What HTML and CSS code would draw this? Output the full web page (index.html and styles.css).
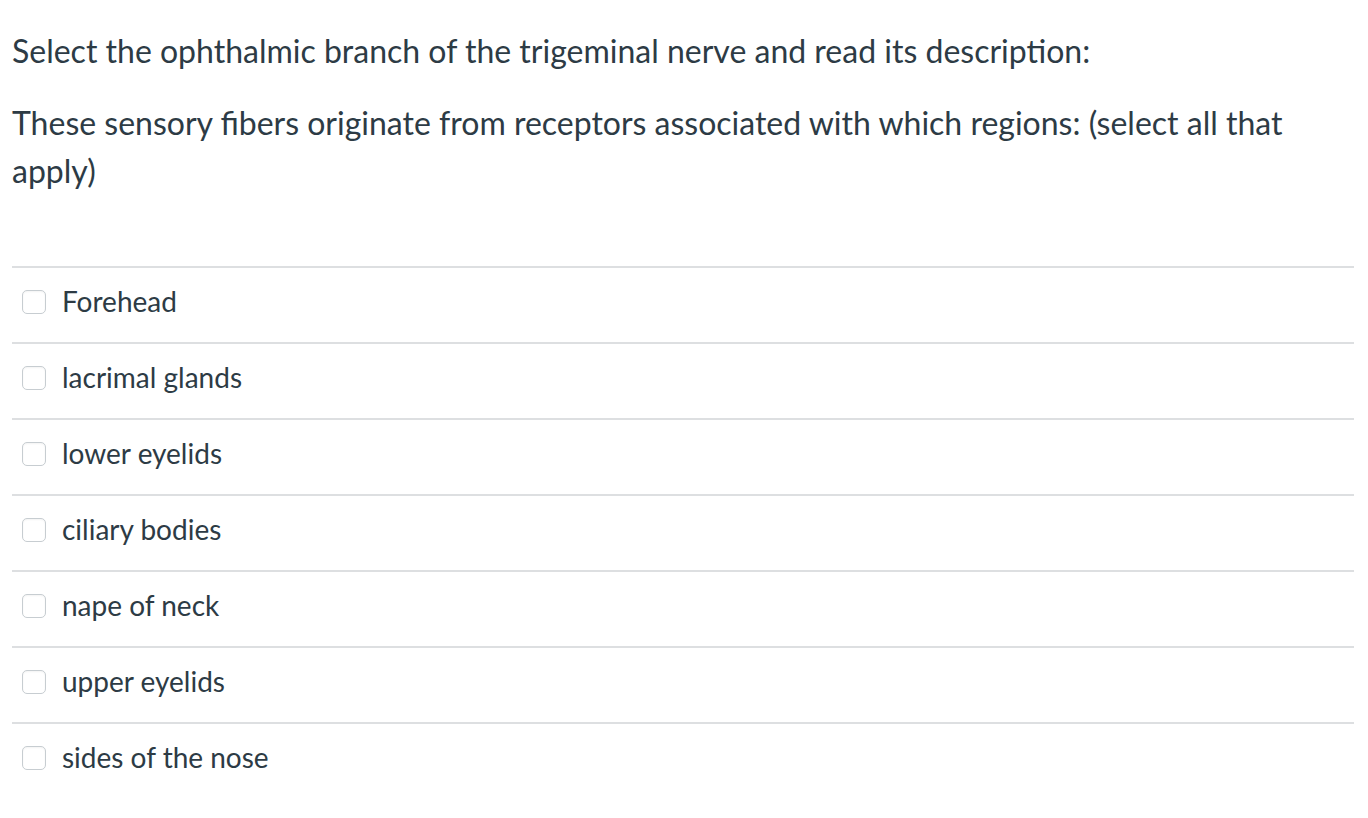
FILE: index.html
```html
<!DOCTYPE html>
<html lang="en">
<head>
<meta charset="utf-8">
<title>Question</title>
<link rel="stylesheet" href="styles.css">
</head>
<body>
<div class="question">
  <p class="prompt">Select the ophthalmic branch of the trigeminal nerve and read its description:</p>
  <p class="prompt sub">These sensory fibers originate from receptors associated with which regions: (select all that apply)</p>
  <div class="answers">
    <label class="answer"><span class="box"></span><span class="label">Forehead</span></label>
    <label class="answer"><span class="box"></span><span class="label">lacrimal glands</span></label>
    <label class="answer"><span class="box"></span><span class="label">lower eyelids</span></label>
    <label class="answer"><span class="box"></span><span class="label">ciliary bodies</span></label>
    <label class="answer"><span class="box"></span><span class="label">nape of neck</span></label>
    <label class="answer"><span class="box"></span><span class="label">upper eyelids</span></label>
    <label class="answer"><span class="box"></span><span class="label">sides of the nose</span></label>
  </div>
</div>
</body>
</html>
```

FILE: styles.css
```css
html, body {
  margin: 0;
  padding: 0;
  background: #ffffff;
}
body {
  font-family: Lato, "Open Sans", sans-serif;
  color: #2d3b45;
}
.question {
  width: 1342px;
  margin-left: 12px;
  padding-top: 27px;
}
.prompt {
  margin: 0;
  font-size: 32px;
  line-height: 48px;
}
.sub {
  margin-top: 24px;
}
.answers {
  margin-top: 71px;
  display: flex;
  flex-direction: column;
}
.answer {
  box-sizing: border-box;
  display: flex;
  align-items: center;
  height: 76px;
  padding-bottom: 8px;
  border-top: 2px solid #dddfe1;
}
.box {
  width: 22px;
  height: 22px;
  margin-left: 10px;
  margin-top: 1px;
  border: 1px solid #c7cdd1;
  border-radius: 5px;
  background: #fff;
  box-shadow: inset 0 1px 2px rgba(0,0,0,0.05);
  flex: none;
}
.label {
  margin-left: 16px;
  font-size: 28px;
  line-height: 34px;
}
```
